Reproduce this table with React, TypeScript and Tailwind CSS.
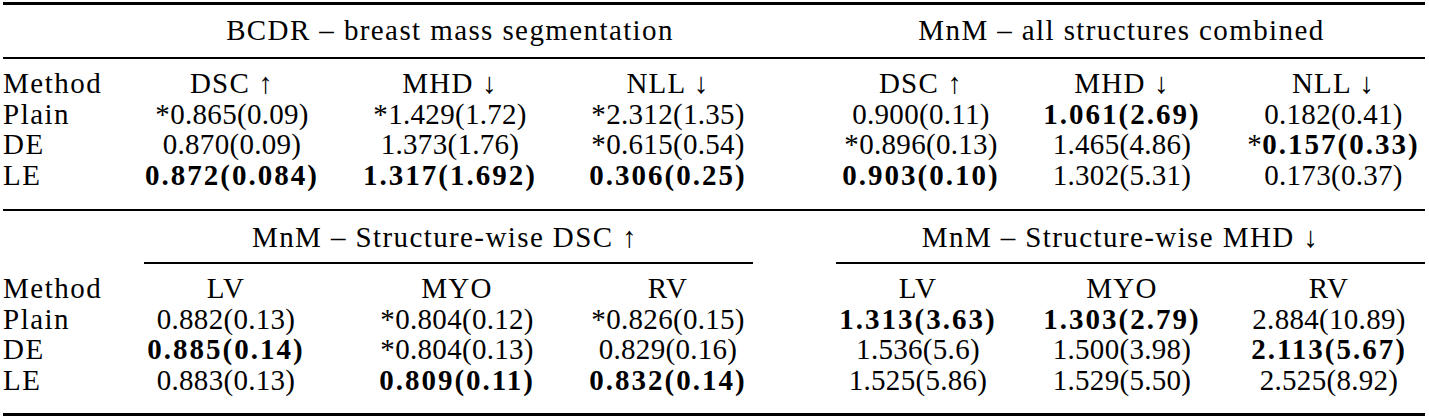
import React from "react";

type Cell = { t: string; b?: boolean; s?: boolean };

const SERIF = "font-['Liberation_Serif']";
const T1 = "grid grid-cols-[120px_218px_218px_218px_41px_206px_196px_205px]";
const T2 = "grid grid-cols-[141px_206px_214px_189px_83px_164px_244px_181px]";

const pad1 = ["", "", "", "", "", "", "", "pl-[22px]"];
const pad2 = ["", "pr-[42px]", "", "pl-[19px]", "", "", "", "pr-[11px]"];

const t1Head = ["DSC ↑", "MHD ↓", "NLL ↓", "DSC ↑", "MHD ↓", "NLL ↓"];
const t1Rows: { m: string; c: Cell[] }[] = [
  {
    m: "Plain",
    c: [
      { t: "0.865(0.09)", s: true },
      { t: "1.429(1.72)", s: true },
      { t: "2.312(1.35)", s: true },
      { t: "0.900(0.11)" },
      { t: "1.061(2.69)", b: true },
      { t: "0.182(0.41)" },
    ],
  },
  {
    m: "DE",
    c: [
      { t: "0.870(0.09)" },
      { t: "1.373(1.76)" },
      { t: "0.615(0.54)", s: true },
      { t: "0.896(0.13)", s: true },
      { t: "1.465(4.86)" },
      { t: "0.157(0.33)", s: true, b: true },
    ],
  },
  {
    m: "LE",
    c: [
      { t: "0.872(0.084)", b: true },
      { t: "1.317(1.692)", b: true },
      { t: "0.306(0.25)", b: true },
      { t: "0.903(0.10)", b: true },
      { t: "1.302(5.31)" },
      { t: "0.173(0.37)" },
    ],
  },
];

const t2Head = ["LV", "MYO", "RV", "LV", "MYO", "RV"];
const t2Rows: { m: string; c: Cell[] }[] = [
  {
    m: "Plain",
    c: [
      { t: "0.882(0.13)" },
      { t: "0.804(0.12)", s: true },
      { t: "0.826(0.15)", s: true },
      { t: "1.313(3.63)", b: true },
      { t: "1.303(2.79)", b: true },
      { t: "2.884(10.89)" },
    ],
  },
  {
    m: "DE",
    c: [
      { t: "0.885(0.14)", b: true },
      { t: "0.804(0.13)", s: true },
      { t: "0.829(0.16)" },
      { t: "1.536(5.6)" },
      { t: "1.500(3.98)" },
      { t: "2.113(5.67)", b: true },
    ],
  },
  {
    m: "LE",
    c: [
      { t: "0.883(0.13)" },
      { t: "0.809(0.11)", b: true },
      { t: "0.832(0.14)", b: true },
      { t: "1.525(5.86)" },
      { t: "1.529(5.50)" },
      { t: "2.525(8.92)" },
    ],
  },
];

const serifStyle = { fontFamily: "'Liberation Serif', 'Times New Roman', serif" };

function Value({ cell }: { cell: Cell }) {
  return (
    <span className="whitespace-nowrap">
      {cell.s ? <span className="tracking-[0.5px]">*</span> : null}
      {cell.b ? (
        <span className="font-bold tracking-[2px]">{cell.t}</span>
      ) : (
        <span className="tracking-[0.3px]">{cell.t}</span>
      )}
    </span>
  );
}

function Row({
  grid,
  pads,
  label,
  cells,
}: {
  grid: string;
  pads: string[];
  label: string;
  cells: React.ReactNode[];
}) {
  const items: React.ReactNode[] = [];
  items.push(
    <div key="m" className="tracking-[1.5px] whitespace-nowrap">
      {label}
    </div>
  );
  cells.forEach((c, i) => {
    const col = i < 3 ? i + 1 : i + 2;
    if (i === 3) items.push(<div key="gap" />);
    items.push(
      <div key={i} className={`flex justify-center ${pads[col]}`}>
        {c}
      </div>
    );
  });
  return <div className={`${grid} h-[30.5px] leading-[30.5px]`}>{items}</div>;
}

export default function App() {
  return (
    <div
      className={`w-[1429px] h-[419px] bg-white overflow-hidden text-[29px] text-black ${SERIF}`}
      style={serifStyle}
    >
      <div className="ml-[3px] w-[1422px] pt-[2px]">
        <div className="h-[3px] bg-black" />

        <div className={`${T1} pt-[10px] pb-[11.5px] leading-[30.5px]`}>
          <div />
          <div className="col-span-3 flex justify-center whitespace-nowrap tracking-[1.4px]">
            BCDR – breast mass segmentation
          </div>
          <div />
          <div className="col-span-3 flex justify-center whitespace-nowrap tracking-[1.4px]">
            MnM – all structures combined
          </div>
        </div>
        <div className="h-[2px] bg-black" />

        <div className="pt-[9px] pb-[19px]">
          <Row
            grid={T1}
            pads={pad1}
            label="Method"
            cells={t1Head.map((h, i) => (
              <span key={i} className="whitespace-nowrap tracking-[1.2px]">
                {h}
              </span>
            ))}
          />
          {t1Rows.map((r) => (
            <Row
              key={r.m}
              grid={T1}
              pads={pad1}
              label={r.m}
              cells={r.c.map((c, i) => (
                <Value key={i} cell={c} />
              ))}
            />
          ))}
        </div>
        <div className="h-[2px] bg-black" />

        <div className={`${T2} pt-[11px] pb-[9.5px] leading-[30.5px]`}>
          <div />
          <div className="col-span-3 flex justify-center whitespace-nowrap tracking-[1.4px] pr-[7px]">
            MnM – Structure-wise DSC ↑
          </div>
          <div />
          <div className="col-span-3 flex justify-center whitespace-nowrap tracking-[1.4px] pr-[20px]">
            MnM – Structure-wise MHD ↓
          </div>
        </div>
        <div className={`${T2} h-[1.5px]`}>
          <div />
          <div className="col-span-3 bg-black" />
          <div />
          <div className="col-span-3 bg-black" />
        </div>

        <div className="pt-[9.5px] pb-[18px]">
          <Row
            grid={T2}
            pads={pad2}
            label="Method"
            cells={t2Head.map((h, i) => (
              <span key={i} className="whitespace-nowrap tracking-[1.2px]">
                {h}
              </span>
            ))}
          />
          {t2Rows.map((r) => (
            <Row
              key={r.m}
              grid={T2}
              pads={pad2}
              label={r.m}
              cells={r.c.map((c, i) => (
                <Value key={i} cell={c} />
              ))}
            />
          ))}
        </div>
        <div className="h-[3px] bg-black" />
      </div>
    </div>
  );
}
